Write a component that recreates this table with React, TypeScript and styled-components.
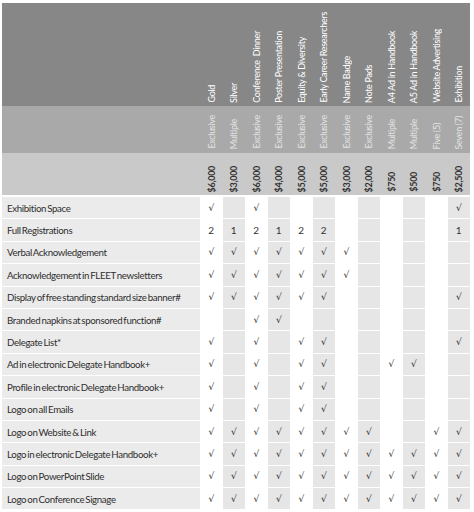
import React from 'react';
import styled, { createGlobalStyle } from 'styled-components';

const GlobalStyle = createGlobalStyle`
  html, body {
    margin: 0;
    padding: 0;
    background: #ffffff;
  }
  body {
    font-family: Lato, "Open Sans", "Liberation Sans", sans-serif;
    color: #333333;
  }
`;

const GRID = '198px repeat(12, 22.5px)';

const Sheet = styled.div`
  padding: 3px 0 0 2px;
  width: 468px;
`;

const Band = styled.div<{ $h: number; $bg: string; $gap?: number }>`
  display: grid;
  grid-template-columns: ${GRID};
  height: ${(p) => p.$h}px;
  background: ${(p) => p.$bg};
  margin-bottom: ${(p) => p.$gap ?? 0}px;
`;

const HeadCell = styled.div<{ $pb: number }>`
  display: flex;
  justify-content: center;
  align-items: flex-end;
  padding-bottom: ${(p) => p.$pb}px;
  overflow: visible;
`;

const VText = styled.span<{ $color: string; $bold?: boolean; $size: number }>`
  writing-mode: vertical-rl;
  transform: rotate(180deg);
  white-space: pre;
  font-size: ${(p) => p.$size}px;
  font-weight: ${(p) => (p.$bold ? 700 : 400)};
  color: ${(p) => p.$color};
  line-height: 1;
  letter-spacing: -0.3px;
`;

const Row = styled.div`
  display: grid;
  grid-template-columns: ${GRID};
  height: 22.4px;
  box-sizing: border-box;
  border-bottom: 1px solid #ffffff;
`;

const Label = styled.div`
  display: flex;
  align-items: center;
  padding-left: 5px;
  background: #ebebeb;
  font-size: 9.7px;
  letter-spacing: -0.35px;
  word-spacing: -1px;
  white-space: nowrap;
  color: #2e2e2e;
`;

const Cell = styled.div<{ $shade: boolean }>`
  display: flex;
  align-items: center;
  justify-content: center;
  background: ${(p) => (p.$shade ? '#e6e6e6' : '#ffffff')};
  font-size: 10px;
  color: #333333;
`;

const Tick = styled.span`
  font-family: "DejaVu Sans", sans-serif;
  font-size: 9px;
  color: #2a2a2a;
`;

const packages = [
  { name: 'Gold', kind: 'Exclusive', price: '$6,000' },
  { name: 'Silver', kind: 'Multiple', price: '$3,000' },
  { name: 'Conference  Dinner', kind: 'Exclusive', price: '$6,000' },
  { name: 'Poster Presentation', kind: 'Exclusive', price: '$4,000' },
  { name: 'Equity & Diversity', kind: 'Exclusive', price: '$5,000' },
  { name: 'Early Career Researchers', kind: 'Exclusive', price: '$5,000' },
  { name: 'Name Badge', kind: 'Exclusive', price: '$3,000' },
  { name: 'Note Pads', kind: 'Exclusive', price: '$2,000' },
  { name: 'A4 Ad in Handbook', kind: 'Multiple', price: '$750' },
  { name: 'A5 Ad in Handbook', kind: 'Multiple', price: '$500' },
  { name: 'Website Advertising', kind: 'Five (5)', price: '$750' },
  { name: 'Exhibition', kind: 'Seven (7)', price: '$2,500' },
];

// 'v' = tick, '' = empty, anything else printed as is
const benefits: [string, string[]][] = [
  ['Exhibition Space', ['v', '', 'v', '', '', '', '', '', '', '', '', 'v']],
  ['Full Registrations', ['2', '1', '2', '1', '2', '2', '', '', '', '', '', '1']],
  ['Verbal Acknowledgement', ['v', 'v', 'v', 'v', 'v', 'v', 'v', '', '', '', '', '']],
  ['Acknowledgement in FLEET newsletters', ['v', 'v', 'v', 'v', 'v', 'v', 'v', '', '', '', '', '']],
  ['Display of free standing standard size banner#', ['v', 'v', 'v', 'v', 'v', 'v', '', '', '', '', '', 'v']],
  ['Branded napkins at sponsored function#', ['', '', 'v', 'v', '', '', '', '', '', '', '', '']],
  ['Delegate List*', ['v', '', 'v', '', 'v', 'v', '', '', '', '', '', 'v']],
  ['Ad in electronic Delegate Handbook+', ['v', '', 'v', '', 'v', 'v', '', '', 'v', 'v', '', '']],
  ['Profile in electronic Delegate Handbook+', ['v', '', 'v', '', 'v', 'v', '', '', '', '', '', '']],
  ['Logo on all Emails', ['v', '', 'v', '', 'v', 'v', '', '', '', '', '', '']],
  ['Logo on Website & Link', ['v', 'v', 'v', 'v', 'v', 'v', 'v', 'v', '', '', 'v', 'v']],
  ['Logo in electronic Delegate Handbook+', Array(12).fill('v')],
  ['Logo on PowerPoint Slide', Array(12).fill('v')],
  ['Logo on Conference Signage', Array(12).fill('v')],
];

export default function App() {
  return (
    <>
      <GlobalStyle />
      <Sheet>
        <Band $h={103} $bg="#878787">
          <div />
          {packages.map((p) => (
            <HeadCell key={p.name} $pb={3}>
              <VText $color="#ffffff" $size={9}>{p.name}</VText>
            </HeadCell>
          ))}
        </Band>
        <Band $h={47} $bg="#a9a9a9">
          <div />
          {packages.map((p, i) => (
            <HeadCell key={i} $pb={4}>
              <VText $color="#e2e2e2" $size={9}>{p.kind}</VText>
            </HeadCell>
          ))}
        </Band>
        <Band $h={42} $bg="#c9c9c9" $gap={2}>
          <div />
          {packages.map((p, i) => (
            <HeadCell key={i} $pb={3}>
              <VText $color="#333333" $size={9} $bold>{p.price}</VText>
            </HeadCell>
          ))}
        </Band>
        {benefits.map(([label, marks]) => (
          <Row key={label}>
            <Label>{label}</Label>
            {marks.map((m, i) => (
              <Cell key={i} $shade={i % 2 === 1}>
                {m === 'v' ? <Tick>√</Tick> : m}
              </Cell>
            ))}
          </Row>
        ))}
      </Sheet>
    </>
  );
}
